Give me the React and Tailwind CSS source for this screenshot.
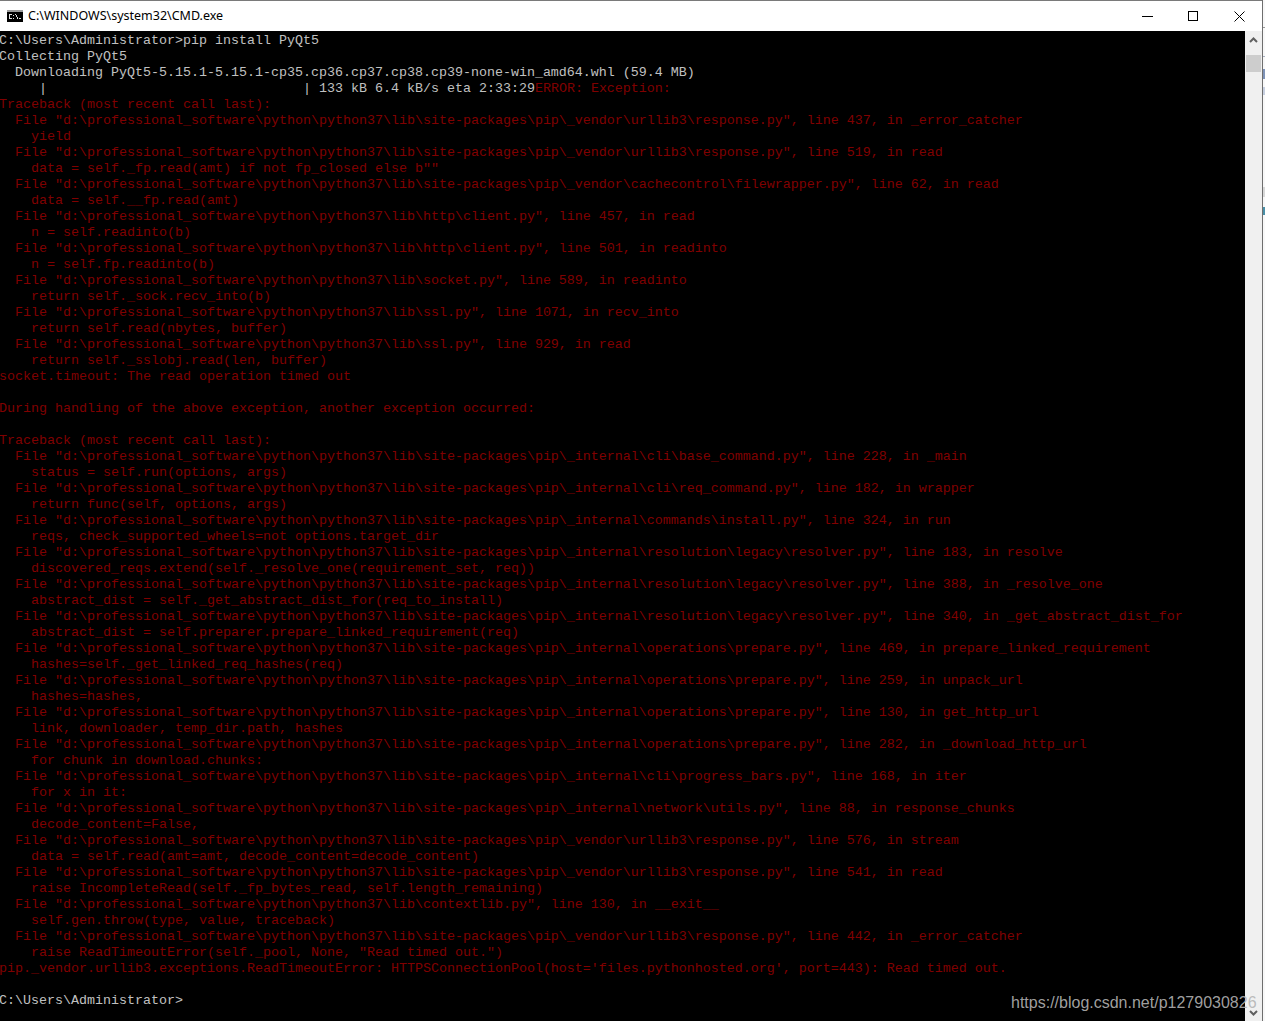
import React from 'react';

const SITE = '  File "d:\\professional_software\\python\\python37\\lib\\site-packages\\pip\\';
const LIB = '  File "d:\\professional_software\\python\\python37\\lib\\';

// Salida de la consola: gris arriba, rojo desde el Traceback
const lineasTraza = [
  'Traceback (most recent call last):',
  SITE + '_vendor\\urllib3\\response.py", line 437, in _error_catcher',
  '    yield',
  SITE + '_vendor\\urllib3\\response.py", line 519, in read',
  '    data = self._fp.read(amt) if not fp_closed else b""',
  SITE + '_vendor\\cachecontrol\\filewrapper.py", line 62, in read',
  '    data = self.__fp.read(amt)',
  LIB + 'http\\client.py", line 457, in read',
  '    n = self.readinto(b)',
  LIB + 'http\\client.py", line 501, in readinto',
  '    n = self.fp.readinto(b)',
  LIB + 'socket.py", line 589, in readinto',
  '    return self._sock.recv_into(b)',
  LIB + 'ssl.py", line 1071, in recv_into',
  '    return self.read(nbytes, buffer)',
  LIB + 'ssl.py", line 929, in read',
  '    return self._sslobj.read(len, buffer)',
  'socket.timeout: The read operation timed out',
  '',
  'During handling of the above exception, another exception occurred:',
  '',
  'Traceback (most recent call last):',
  SITE + '_internal\\cli\\base_command.py", line 228, in _main',
  '    status = self.run(options, args)',
  SITE + '_internal\\cli\\req_command.py", line 182, in wrapper',
  '    return func(self, options, args)',
  SITE + '_internal\\commands\\install.py", line 324, in run',
  '    reqs, check_supported_wheels=not options.target_dir',
  SITE + '_internal\\resolution\\legacy\\resolver.py", line 183, in resolve',
  '    discovered_reqs.extend(self._resolve_one(requirement_set, req))',
  SITE + '_internal\\resolution\\legacy\\resolver.py", line 388, in _resolve_one',
  '    abstract_dist = self._get_abstract_dist_for(req_to_install)',
  SITE + '_internal\\resolution\\legacy\\resolver.py", line 340, in _get_abstract_dist_for',
  '    abstract_dist = self.preparer.prepare_linked_requirement(req)',
  SITE + '_internal\\operations\\prepare.py", line 469, in prepare_linked_requirement',
  '    hashes=self._get_linked_req_hashes(req)',
  SITE + '_internal\\operations\\prepare.py", line 259, in unpack_url',
  '    hashes=hashes,',
  SITE + '_internal\\operations\\prepare.py", line 130, in get_http_url',
  '    link, downloader, temp_dir.path, hashes',
  SITE + '_internal\\operations\\prepare.py", line 282, in _download_http_url',
  '    for chunk in download.chunks:',
  SITE + '_internal\\cli\\progress_bars.py", line 168, in iter',
  '    for x in it:',
  SITE + '_internal\\network\\utils.py", line 88, in response_chunks',
  '    decode_content=False,',
  SITE + '_vendor\\urllib3\\response.py", line 576, in stream',
  '    data = self.read(amt=amt, decode_content=decode_content)',
  SITE + '_vendor\\urllib3\\response.py", line 541, in read',
  '    raise IncompleteRead(self._fp_bytes_read, self.length_remaining)',
  LIB + 'contextlib.py", line 130, in __exit__',
  '    self.gen.throw(type, value, traceback)',
  SITE + '_vendor\\urllib3\\response.py", line 442, in _error_catcher',
  '    raise ReadTimeoutError(self._pool, None, "Read timed out.")',
  "pip._vendor.urllib3.exceptions.ReadTimeoutError: HTTPSConnectionPool(host='files.pythonhosted.org', port=443): Read timed out.",
  '',
];

const Linea = ({ children, className = '' }) => (
  <div className={`h-4 leading-4 whitespace-pre ${className}`}>{children}</div>
);

const IconoCmd = () => (
  <svg width="16" height="12" viewBox="0 0 16 12" className="block">
    <rect width="16" height="12" fill="#000" />
    <rect x="0" y="0" width="16" height="2" fill="#9a9a9a" />
    <rect x="2" y="4" width="1" height="5" fill="#e0e0e0" />
    <rect x="3" y="4" width="2" height="1" fill="#e0e0e0" />
    <rect x="3" y="8" width="2" height="1" fill="#e0e0e0" />
    <rect x="6" y="5" width="1" height="1" fill="#e0e0e0" />
    <rect x="6" y="8" width="1" height="1" fill="#e0e0e0" />
    <rect x="8" y="4" width="1" height="1" fill="#e0e0e0" />
    <rect x="9" y="5" width="1" height="2" fill="#e0e0e0" />
    <rect x="10" y="7" width="1" height="2" fill="#e0e0e0" />
    <rect x="12" y="8" width="2" height="1" fill="#e0e0e0" />
  </svg>
);

const Minimizar = () => (
  <svg width="11" height="11" viewBox="0 0 11 11" className="block">
    <path d="M0 5.5H11" stroke="#000" strokeWidth="1" />
  </svg>
);

const Maximizar = () => (
  <svg width="10" height="10" viewBox="0 0 10 10" className="block">
    <rect x="0.5" y="0.5" width="9" height="9" fill="none" stroke="#000" strokeWidth="1" />
  </svg>
);

const Cerrar = () => (
  <svg width="11" height="11" viewBox="0 0 11 11" className="block">
    <path d="M0.5 0.5L10.5 10.5M10.5 0.5L0.5 10.5" stroke="#000" strokeWidth="1" />
  </svg>
);

const Flecha = ({ abajo }) => (
  <svg width="9" height="6" viewBox="0 0 9 6" className="block">
    <path d={abajo ? 'M1 1L4.5 4.5L8 1' : 'M1 5L4.5 1.5L8 5'} fill="none" stroke="#606060" strokeWidth="2" />
  </svg>
);

const App = () => {
  return (
    <div className="relative flex h-[1021px] w-[1265px] overflow-hidden bg-white">
      <div className="flex w-[1263px] flex-col border-r border-[#6e6e6e]">
        <div className="flex h-[31px] shrink-0 items-center border-t border-[#7a7a7a] bg-white pl-[7px]">
          <IconoCmd />
          <span className="ml-[5px] font-['Noto_Sans',sans-serif] text-[12.5px] text-black">
            C:\WINDOWS\system32\CMD.exe
          </span>
          <div className="ml-auto flex">
            <div className="flex w-[46px] justify-center"><Minimizar /></div>
            <div className="flex w-[46px] justify-center"><Maximizar /></div>
            <div className="flex w-[46px] justify-center"><Cerrar /></div>
          </div>
        </div>

        <div className="flex min-h-0 flex-1">
          <div className="flex-1 overflow-hidden bg-black pt-[2px] font-['Liberation_Mono',monospace] text-[13.33px] text-[#c0c0c0]">
            <div className="-ml-px">
              <Linea>{'C:\\Users\\Administrator>pip install PyQt5'}</Linea>
              <Linea>Collecting PyQt5</Linea>
              <Linea>{'  Downloading PyQt5-5.15.1-5.15.1-cp35.cp36.cp37.cp38.cp39-none-win_amd64.whl (59.4 MB)'}</Linea>
              <Linea>
                {'     |                                | 133 kB 6.4 kB/s eta 2:33:29'}
                <span className="text-[#800000]">ERROR: Exception:</span>
              </Linea>
              {lineasTraza.map((linea, i) => (
                <Linea key={i} className="text-[#800000]">{linea}</Linea>
              ))}
              <Linea>{'C:\\Users\\Administrator>'}</Linea>
            </div>
          </div>

          <div className="flex w-[17px] shrink-0 flex-col items-center bg-[#f0f0f0]">
            <div className="flex h-[17px] shrink-0 items-center justify-center pt-[1px]"><Flecha /></div>
            <div className="mt-[7px] h-[17px] w-[15px] shrink-0 bg-[#cdcdcd]"></div>
            <div className="mt-auto flex h-[17px] shrink-0 items-center justify-center"><Flecha abajo /></div>
          </div>
        </div>
      </div>

      {/* Resto del escritorio que asoma a la derecha */}
      <div className="flex w-[2px] flex-col bg-[#f8f8f8]">
        <div className="mt-[27px] h-px bg-[#9a9a9a]"></div>
        <div className="mt-[28px] h-px bg-[#a8b0c0]"></div>
        <div className="mt-[12px] h-[10px] bg-[#7f93b8]"></div>
        <div className="mt-[8px] h-[8px] bg-[#c8d0e0]"></div>
        <div className="mt-[92px] h-[10px] bg-[#d8d8d8]"></div>
        <div className="mt-[10px] h-[8px] bg-[#4a90a8]"></div>
      </div>

      <span className="absolute left-[1011px] top-[994px] font-['Liberation_Sans',sans-serif] text-base leading-[18px] text-[#b4b4b4]/90">
        https://blog.csdn.net/p1279030826
      </span>
    </div>
  );
};

export default App;
